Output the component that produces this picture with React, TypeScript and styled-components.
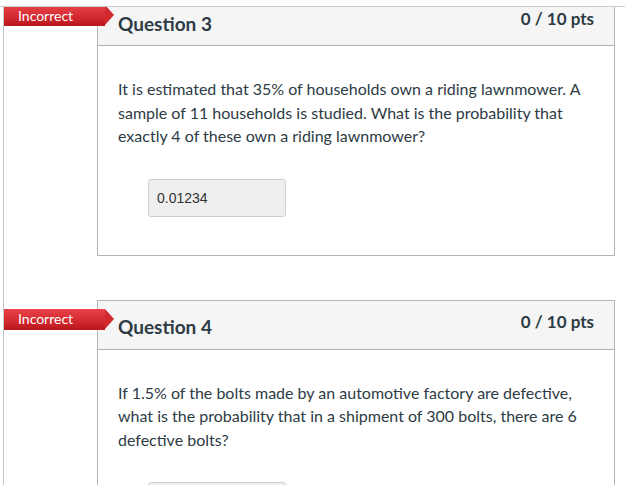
import React from 'react'
import styled, { createGlobalStyle } from 'styled-components'

const GlobalStyle = createGlobalStyle`
  html, body {
    margin: 0;
    padding: 0;
    background: #ffffff;
  }
  body {
    font-family: Lato, "Noto Sans", sans-serif;
    color: #2d3b45;
  }
`

const Page = styled.div`
  position: relative;
  width: 625px;
  height: 485px;
  overflow: hidden;
  background: #ffffff;
`

const TopStrip = styled.div`
  position: absolute;
  top: 0;
  left: 0;
  right: 0;
  height: 6px;
  background: #ffffff;
  border-bottom: 1px solid #c7cdd1;
  z-index: 3;
`

const Rail = styled.div`
  margin-top: -4px;
  margin-left: 3px;
  border-left: 1px solid #c7c7c7;
  min-height: 600px;
  display: flex;
  flex-direction: column;
  gap: 44px;
`

const Holder = styled.div`
  position: relative;
  padding-left: 93px;
`

const Banner = styled.div`
  position: absolute;
  top: 9px;
  left: 0;
  width: 101px;
  height: 21px;
  padding-left: 14px;
  padding-bottom: 1px;
  box-sizing: border-box;
  display: flex;
  align-items: center;
  color: #ffffff;
  font-size: 14px;
  background: linear-gradient(to bottom, #e8444a 0%, #d42a30 55%, #b8171d 100%);
  z-index: 2;

  &::after {
    content: '';
    position: absolute;
    top: 0;
    right: -9px;
    border-top: 10.5px solid transparent;
    border-bottom: 10.5px solid transparent;
    border-left: 9px solid #d02a30;
  }
`

const Box = styled.div`
  width: 518px;
  box-sizing: border-box;
  border: 1px solid #b5b5b5;
  background: #ffffff;
`

const Header = styled.div`
  height: 49px;
  display: flex;
  align-items: center;
  justify-content: space-between;
  padding: 4px 20px 0;
  box-sizing: border-box;
  background: #f5f5f5;
  border-bottom: 1px solid #b5b5b5;
`

const Title = styled.h2`
  margin: 0;
  font-size: 19px;
  font-weight: 700;
  color: #2d3b45;
`

const Points = styled.span`
  font-size: 17px;
  font-weight: 700;
  color: #2d3b45;
  margin-top: -10px;
`

const Body = styled.div`
  padding: 31px 20px 38px;
`

const Text = styled.p`
  margin: 0 0 31px;
  font-size: 16px;
  line-height: 23.5px;
  color: #2d3b45;
`

const Answer = styled.div`
  margin-left: 30px;
  width: 138px;
  height: 38px;
  box-sizing: border-box;
  border: 1px solid #cfcfcf;
  border-radius: 3px;
  background: #efefef;
  display: flex;
  align-items: center;
  padding-left: 8px;
  font-family: "Liberation Sans", Arial, sans-serif;
  font-size: 14px;
  color: #333333;
`

type Question = {
  number: number
  text: string
  answer: string
}

const questions: Question[] = [
  {
    number: 3,
    text: 'It is estimated that 35% of households own a riding lawnmower. A sample of 11 households is studied. What is the probability that exactly 4 of these own a riding lawnmower?',
    answer: '0.01234',
  },
  {
    number: 4,
    text: 'If 1.5% of the bolts made by an automotive factory are defective, what is the probability that in a shipment of 300 bolts, there are 6 defective bolts?',
    answer: '',
  },
]

export default function App() {
  return (
    <Page>
      <GlobalStyle />
      <TopStrip />
      <Rail>
        {questions.map((q) => (
          <Holder key={q.number}>
            <Banner>Incorrect</Banner>
            <Box>
              <Header>
                <Title>Question {q.number}</Title>
                <Points>0 / 10 pts</Points>
              </Header>
              <Body>
                <Text>{q.text}</Text>
                <Answer>{q.answer}</Answer>
              </Body>
            </Box>
          </Holder>
        ))}
      </Rail>
    </Page>
  )
}
